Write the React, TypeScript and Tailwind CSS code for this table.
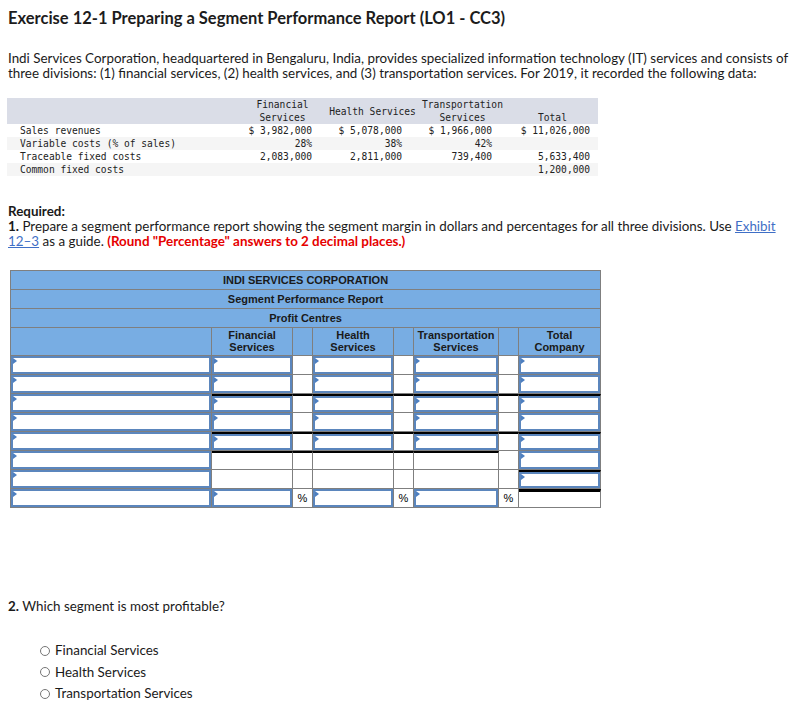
import React from 'react';

const body = { fontFamily: 'Lato, "Open Sans", sans-serif' };
const mono = { fontFamily: '"DejaVu Sans Mono", "Liberation Mono", monospace' };
const arial = { fontFamily: '"Liberation Sans", Arial, sans-serif' };

// widths of the report grid columns
const cols = 'grid-cols-[201px_81px_20px_81px_20px_85px_20px_82px]';

type Cell = { input?: boolean; pct?: boolean; black?: 'thin' | 'thick' };

function Marker() {
  return (
    <span className="absolute left-0 top-0 w-0 h-0 border-y-[3px] border-y-transparent border-l-[4px] border-l-[#4d7fc0]" />
  );
}

function ReportCell({ cell }: { cell: Cell }) {
  const top =
    cell.black === 'thick'
      ? 'border-t-[3px] border-t-black'
      : cell.black === 'thin'
      ? 'border-t-2 border-t-black'
      : '';
  return (
    <div className={`relative h-[19px] border-r border-b border-[#7f7f7f] bg-white ${top}`}>
      {cell.input && (
        <div className="absolute inset-0 border-2 border-[#5b86bd] bg-white">
          <Marker />
        </div>
      )}
      {cell.pct && (
        <div className="h-full flex items-center justify-center text-[11px] text-black" style={arial}>
          %
        </div>
      )}
    </div>
  );
}

const I: Cell = { input: true };
const E: Cell = {};
const B: Cell = { black: 'thin' };
const IB: Cell = { input: true, black: 'thin' };
const rows: Cell[][] = [
  [I, I, E, I, E, I, E, I],
  [I, I, E, I, E, I, E, I],
  [I, IB, B, IB, B, IB, B, IB],
  [I, I, E, I, E, I, E, I],
  [I, IB, B, IB, B, IB, B, IB],
  [I, B, B, B, B, B, E, I],
  [I, E, E, E, E, E, E, IB],
  [I, I, { pct: true }, I, { pct: true }, I, { pct: true }, { black: 'thick' }],
];

const data = [
  { label: 'Sales revenues', fin: '$ 3,982,000', health: '$ 5,078,000', trans: '$ 1,966,000', total: '$ 11,026,000' },
  { label: 'Variable costs (% of sales)', fin: '28%', health: '38%', trans: '42%', total: '' },
  { label: 'Traceable fixed costs', fin: '2,083,000', health: '2,811,000', trans: '739,400', total: '5,633,400' },
  { label: 'Common fixed costs', fin: '', health: '', trans: '', total: '1,200,000' },
];

const dataCols = 'grid-cols-[233px_85px_95px_85px_93px]';

export default function App() {
  return (
    <div className="min-h-screen bg-white px-2 text-[#1a1a1a]" style={body}>
      <h1 className="pt-2 text-[16.5px] leading-[20px] font-bold text-[#1c1c1c]">
        Exercise 12-1 Preparing a Segment Performance Report (LO1 - CC3)
      </h1>

      <p className="mt-[23px] text-[13.4px] leading-[15px] whitespace-nowrap">
        Indi Services Corporation, headquartered in Bengaluru, India, provides specialized information technology (IT) services and consists of
        <br />
        three divisions: (1) financial services, (2) health services, and (3) transportation services. For 2019, it recorded the following data:
      </p>

      {/* given data */}
      <div className="mt-[17px] -ml-px w-[591px] text-[9.6px] leading-[13px] text-[#222]" style={mono}>
        <div className={`grid ${dataCols} h-[26px] bg-[#dadde7]`}>
          <div />
          <div className="text-center">Financial<br />Services</div>
          <div className="flex items-center justify-center">Health Services</div>
          <div className="text-center">Transportation<br />Services</div>
          <div className="flex items-end justify-center pl-[2px]">Total</div>
        </div>
        {data.map((r, i) => (
          <div key={r.label} className={`grid ${dataCols} h-[13px] ${i % 2 === 1 ? 'bg-[#f5f5f5]' : 'bg-white'}`}>
            <div className="pl-[13px]">{r.label}</div>
            <div className="text-right pr-[13px]">{r.fin}</div>
            <div className="text-right pr-[18px]">{r.health}</div>
            <div className="text-right pr-[13px]">{r.trans}</div>
            <div className="text-right pr-[8px]">{r.total}</div>
          </div>
        ))}
      </div>

      <div className="mt-[28px] text-[13.4px] leading-[15px] whitespace-nowrap">
        <div className="font-bold">Required:</div>
        <div>
          <span className="font-bold">1.</span> Prepare a segment performance report showing the segment margin in dollars and percentages for all three divisions. Use{' '}
          <a className="text-[#3f6fc6] underline">Exhibit</a>
          <br />
          <a className="text-[#3f6fc6] underline">12–3</a> as a guide.{' '}
          <span className="font-bold text-[#e60000]">(Round "Percentage" answers to 2 decimal places.)</span>
        </div>
      </div>

      {/* report grid */}
      <div className="mt-[21px] ml-[2px] w-[591px] border-l border-t border-[#7f7f7f]" style={arial}>
        <div className="h-[19px] border-r border-b border-[#7f7f7f] bg-[#78ade3] flex items-center justify-center text-[11px] font-bold text-[#1a1a1a]">
          INDI SERVICES CORPORATION
        </div>
        <div className="h-[19px] border-r border-b border-[#7f7f7f] bg-[#78ade3] flex items-center justify-center text-[11px] font-bold text-[#1a1a1a]">
          Segment Performance Report
        </div>
        <div className="h-[19px] border-r border-b border-[#7f7f7f] bg-[#78ade3] flex items-center justify-center text-[11px] font-bold text-[#1a1a1a]">
          Profit Centres
        </div>
        <div className={`grid ${cols} text-[11px] font-bold leading-[12px] text-[#1a1a1a]`}>
          {['', 'Financial\nServices', '', 'Health\nServices', '', 'Transportation\nServices', '', 'Total\nCompany'].map((t, i) => (
            <div key={i} className="h-[28px] border-r border-b border-[#7f7f7f] bg-[#78ade3] pt-[1px] text-center whitespace-pre-line">
              {t}
            </div>
          ))}
        </div>
        {rows.map((row, ri) => (
          <div key={ri} className={`grid ${cols}`}>
            {row.map((c, ci) => (
              <ReportCell key={ci} cell={c} />
            ))}
          </div>
        ))}
      </div>

      <div className="mt-[91px] text-[13.4px] leading-[15px]">
        <span className="font-bold">2.</span> Which segment is most profitable?
      </div>

      <div className="mt-[29px] ml-[32px] flex flex-col gap-[6.5px] text-[13.4px] leading-[15px]">
        {['Financial Services', 'Health Services', 'Transportation Services'].map((o) => (
          <label key={o} className="flex items-center gap-[5px]">
            <span className="w-[10px] h-[10px] rounded-full border border-[#767676] bg-white" />
            {o}
          </label>
        ))}
      </div>
    </div>
  );
}
